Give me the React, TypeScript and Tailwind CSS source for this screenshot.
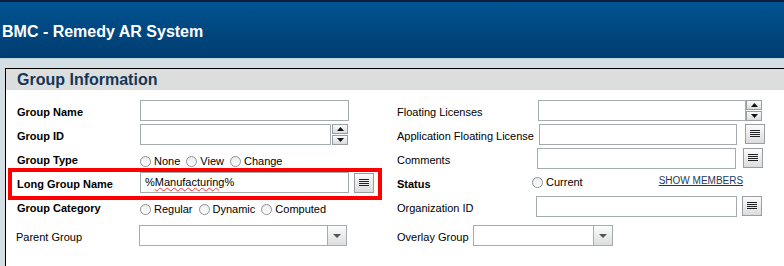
import type { ReactNode } from 'react'

const font = { fontFamily: '"Liberation Sans", Arial, sans-serif' }

function ListButton({ className = '' }: { className?: string }) {
  return (
    <div className={`flex h-5 w-5 items-center justify-center border border-[#9a9ea0] bg-linear-to-b from-[#fbfbfb] to-[#dadcdd] ${className}`}>
      <svg width="10" height="8" viewBox="0 0 10 8">
        <path d="M0 0.5H10M0 2.5H10M0 4.5H10M0 6.5H10" stroke="#222" strokeWidth="1" />
      </svg>
    </div>
  )
}

function Spinner() {
  return (
    <div className="flex h-[21px] w-4 flex-col gap-px">
      <div className="flex h-[10px] items-center justify-center border border-[#9a9ea0] bg-linear-to-b from-[#fbfbfb] to-[#dadcdd]">
        <svg width="7" height="4" viewBox="0 0 7 4"><path d="M3.5 0L7 4H0Z" fill="#111" /></svg>
      </div>
      <div className="flex h-[10px] items-center justify-center border border-[#9a9ea0] bg-linear-to-b from-[#fbfbfb] to-[#dadcdd]">
        <svg width="7" height="4" viewBox="0 0 7 4"><path d="M0 0H7L3.5 4Z" fill="#111" /></svg>
      </div>
    </div>
  )
}

function Input({ w, children }: { w: string; children?: ReactNode }) {
  return (
    <div className={`flex h-[21px] items-center border border-[#a4acaf] bg-white px-[3px] text-[11px] ${w}`}>
      {children}
    </div>
  )
}

function Select({ w }: { w: string }) {
  return (
    <div className={`flex h-[21px] border border-[#a4acaf] bg-white ${w}`}>
      <div className="flex-1" />
      <div className="flex w-[19px] items-center justify-center border-l border-[#a4acaf] bg-linear-to-b from-[#fbfbfb] to-[#dcdedf]">
        <svg width="8" height="4" viewBox="0 0 8 4"><path d="M0 0H8L4 4Z" fill="#555" /></svg>
      </div>
    </div>
  )
}

function Radio({ label }: { label: string }) {
  return (
    <span className="flex items-center gap-[3px]">
      <span className="h-[11px] w-[11px] rounded-full border border-[#8d9396] bg-linear-to-b from-[#ececec] to-white" />
      <span className="text-[11px] leading-[13px]">{label}</span>
    </span>
  )
}

function Label({ children, bold, w }: { children: ReactNode; bold?: boolean; w: string }) {
  return (
    <div className={`shrink-0 pt-[6px] text-[11px] leading-[13px] text-black ${bold ? 'font-bold' : ''} ${w}`}>
      {children}
    </div>
  )
}

export default function App() {
  return (
    <div style={font} className="relative h-[266px] w-[784px] overflow-hidden bg-[#d5dee3]">
      <div className="flex h-[59px] flex-col">
        <div className="h-[2px] bg-[#0b1d3a]" />
        <div className="flex flex-1 items-center bg-linear-to-b from-[#005392] to-[#003d70] pl-[2px] pt-[3px]">
          <span className="text-[16px] font-bold text-white">BMC - Remedy AR System</span>
        </div>
        <div className="h-px bg-[#b8d8dc]" />
      </div>

      <div className="ml-[5px] mt-[9px] h-[220px] border-l border-t border-black bg-white">
        <div className="flex h-[21px] items-center bg-[#dcdedd] pl-[11px]">
          <span className="text-[16px] font-bold leading-[20px] text-[#163656]">Group Information</span>
        </div>

        <div className="flex pt-[10px]">
          <div className="flex w-[380px] flex-col pl-[11px]">
            <div className="flex h-6">
              <Label bold w="w-[123px]">Group Name</Label>
              <Input w="w-[209px]" />
            </div>
            <div className="flex h-6">
              <Label bold w="w-[123px]">Group ID</Label>
              <Input w="w-[191px]" />
              <div className="ml-px"><Spinner /></div>
            </div>
            <div className="flex h-6">
              <Label bold w="w-[123px]">Group Type</Label>
              <div className="flex gap-[6px] pt-[3px]">
                <Radio label="None" />
                <Radio label="View" />
                <Radio label="Change" />
              </div>
            </div>
            <div className="flex h-6">
              <Label bold w="w-[123px]">Long Group Name</Label>
              <Input w="w-[209px]">
                <span className="pl-px">
                  %<span className="underline decoration-red-500 decoration-wavy decoration-1 underline-offset-1">Manufacturing</span>%
                </span>
              </Input>
              <ListButton className="ml-[5px] mt-px" />
            </div>
            <div className="flex h-6">
              <Label bold w="w-[123px]">Group Category</Label>
              <div className="flex gap-[6px] pt-[3px]">
                <Radio label="Regular" />
                <Radio label="Dynamic" />
                <Radio label="Computed" />
              </div>
            </div>
            <div className="mt-[5px] flex h-6 -ml-px">
              <Label w="w-[123px]">Parent Group</Label>
              <Select w="w-[208px]" />
            </div>
          </div>

          <div className="ml-[11px] flex flex-col">
            <div className="flex h-6">
              <Label w="w-[141px]">Floating Licenses</Label>
              <Input w="w-[208px]" />
              <Spinner />
            </div>
            <div className="flex h-6">
              <Label w="w-[142px]">Application Floating License</Label>
              <Input w="w-[198px]" />
              <ListButton className="ml-[8px]" />
            </div>
            <div className="flex h-6">
              <Label w="w-[140px]">Comments</Label>
              <Input w="w-[199px]" />
              <ListButton className="ml-[7px]" />
            </div>
            <div className="flex h-6">
              <Label bold w="w-[135px]">Status</Label>
              <div className="pt-[4px]"><Radio label="Current" /></div>
              <a className="ml-[76px] pt-[2px] text-[10px] leading-[13px] text-[#1b3a62] underline">SHOW MEMBERS</a>
            </div>
            <div className="flex h-6">
              <Label w="w-[139px]">Organization ID</Label>
              <Input w="w-[201px]" />
              <ListButton className="ml-[5px]" />
            </div>
            <div className="mt-[5px] flex h-6">
              <Label w="w-[76px]">Overlay Group</Label>
              <Select w="w-[140px]" />
            </div>
          </div>
        </div>
      </div>

      <div className="pointer-events-none absolute left-[8px] top-[168px] h-[32px] w-[374px] border-4 border-[#ff0000]" />
    </div>
  )
}
